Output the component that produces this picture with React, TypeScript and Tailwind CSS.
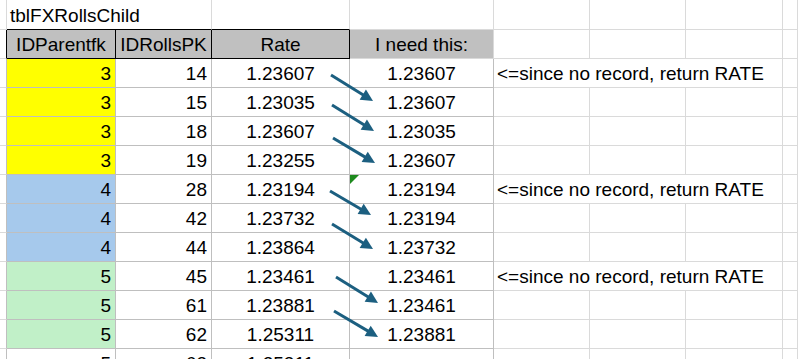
import type { ReactNode } from "react";

type DataRow = {
  parent: string;
  pk: string;
  rate: string;
  need: string;
  fill: string;
  note?: boolean;
  flag?: boolean;
};

const rows: DataRow[] = [
  { parent: "3", pk: "14", rate: "1.23607", need: "1.23607", fill: "bg-[#ffff00]", note: true },
  { parent: "3", pk: "15", rate: "1.23035", need: "1.23607", fill: "bg-[#ffff00]" },
  { parent: "3", pk: "18", rate: "1.23607", need: "1.23035", fill: "bg-[#ffff00]" },
  { parent: "3", pk: "19", rate: "1.23255", need: "1.23607", fill: "bg-[#ffff00]" },
  { parent: "4", pk: "28", rate: "1.23194", need: "1.23194", fill: "bg-[#a6c9ec]", note: true, flag: true },
  { parent: "4", pk: "42", rate: "1.23732", need: "1.23194", fill: "bg-[#a6c9ec]" },
  { parent: "4", pk: "44", rate: "1.23864", need: "1.23732", fill: "bg-[#a6c9ec]" },
  { parent: "5", pk: "45", rate: "1.23461", need: "1.23461", fill: "bg-[#c1f0c8]", note: true },
  { parent: "5", pk: "61", rate: "1.23881", need: "1.23461", fill: "bg-[#c1f0c8]" },
  { parent: "5", pk: "62", rate: "1.25311", need: "1.23881", fill: "bg-[#c1f0c8]" },
  { parent: "5", pk: "63", rate: "1.25311", need: "", fill: "bg-white" },
];

// start -> tip, in page pixels
const arrows: [number, number, number, number][] = [
  [331, 75, 373, 101],
  [332, 105, 374, 131],
  [333, 138, 375, 163],
  [330, 191, 371, 215],
  [332, 224, 373, 249],
  [336, 277, 378, 303],
  [334, 311, 378, 337],
];

function Cell({ className, children }: { className: string; children?: ReactNode }) {
  return (
    <div
      className={`flex h-full shrink-0 items-end border-r border-b pb-[3px] leading-[20px] whitespace-nowrap ${className}`}
    >
      {children}
    </div>
  );
}

function Arrow({ x1, y1, x2, y2 }: { x1: number; y1: number; x2: number; y2: number }) {
  const dx = x2 - x1;
  const dy = y2 - y1;
  const len = Math.hypot(dx, dy);
  const ux = dx / len;
  const uy = dy / len;
  const bx = x2 - ux * 12;
  const by = y2 - uy * 12;
  const nx = -uy * 6;
  const ny = ux * 6;
  return (
    <g>
      <line x1={x1} y1={y1} x2={bx + ux * 2} y2={by + uy * 2} stroke="#1c5f80" strokeWidth={3} />
      <polygon points={`${x2},${y2} ${bx + nx},${by + ny} ${bx - nx},${by - ny}`} fill="#1c5f80" />
    </g>
  );
}

export default function App() {
  const sheet = "border-[#dadada]";
  const table = "border-[#bfbfbf]";

  return (
    <div
      className="relative h-[359px] w-[798px] overflow-hidden bg-white text-[19px] text-black"
      style={{ fontFamily: '"Liberation Sans", Arial, sans-serif' }}
    >
      {/* title row */}
      <div className="flex h-[30px]">
        <Cell className={`w-[7px] ${sheet}`} />
        <Cell className={`w-[205px] pl-[3px] border-r-[#dadada] border-b-black`}>tblFXRollsChild</Cell>
        <Cell className={`w-[138px] border-r-[#dadada] border-b-black`} />
        <Cell className={`w-[144px] ${sheet}`} />
        <Cell className={`w-[96px] ${sheet}`} />
        <Cell className={`w-[96px] ${sheet}`} />
        <Cell className={`w-[97px] ${sheet}`} />
        <Cell className={`flex-1 ${sheet}`} />
      </div>

      {/* header row */}
      <div className="flex h-[29px]">
        <Cell className="w-[7px] border-r-black border-b-[#dadada]" />
        <Cell className="w-[109px] justify-center border-black bg-[#c0c0c0]">IDParentfk</Cell>
        <Cell className="w-[96px] justify-center border-black bg-[#c0c0c0]">IDRollsPK</Cell>
        <Cell className="w-[138px] justify-center border-black bg-[#c0c0c0]">Rate</Cell>
        <Cell className={`w-[144px] justify-center bg-[#c0c0c0] ${sheet}`}>I need this:</Cell>
        <Cell className={`w-[96px] ${sheet}`} />
        <Cell className={`w-[96px] ${sheet}`} />
        <Cell className={`w-[97px] ${sheet}`} />
        <Cell className={`flex-1 ${sheet}`} />
      </div>

      {rows.map((r, i) => (
        <div className="flex h-[29px]" key={i}>
          <Cell className={`w-[7px] border-r-[#bfbfbf] border-b-[#dadada]`} />
          <Cell className={`w-[109px] justify-end pr-[4px] ${table} ${r.fill}`}>{r.parent}</Cell>
          <Cell className={`w-[96px] justify-end pr-[4px] ${table}`}>{r.pk}</Cell>
          <Cell className={`w-[138px] justify-center ${table}`}>{r.rate}</Cell>
          <Cell className={`relative w-[144px] justify-center ${table}`}>
            {r.flag && (
              <span className="absolute top-0 left-0 h-0 w-0 border-t-[9px] border-r-[9px] border-t-[#1e8a1e] border-r-transparent" />
            )}
            {r.need}
          </Cell>
          {r.note ? (
            <Cell className={`w-[289px] pl-[3px] ${sheet}`}>{"<=since no record, return RATE"}</Cell>
          ) : (
            <>
              <Cell className={`w-[96px] ${sheet}`} />
              <Cell className={`w-[96px] ${sheet}`} />
              <Cell className={`w-[97px] ${sheet}`} />
            </>
          )}
          <Cell className={`flex-1 ${sheet}`} />
        </div>
      ))}

      <svg className="pointer-events-none absolute top-0 left-0" width={798} height={359}>
        {arrows.map(([x1, y1, x2, y2], i) => (
          <Arrow key={i} x1={x1} y1={y1} x2={x2} y2={y2} />
        ))}
      </svg>
    </div>
  );
}
